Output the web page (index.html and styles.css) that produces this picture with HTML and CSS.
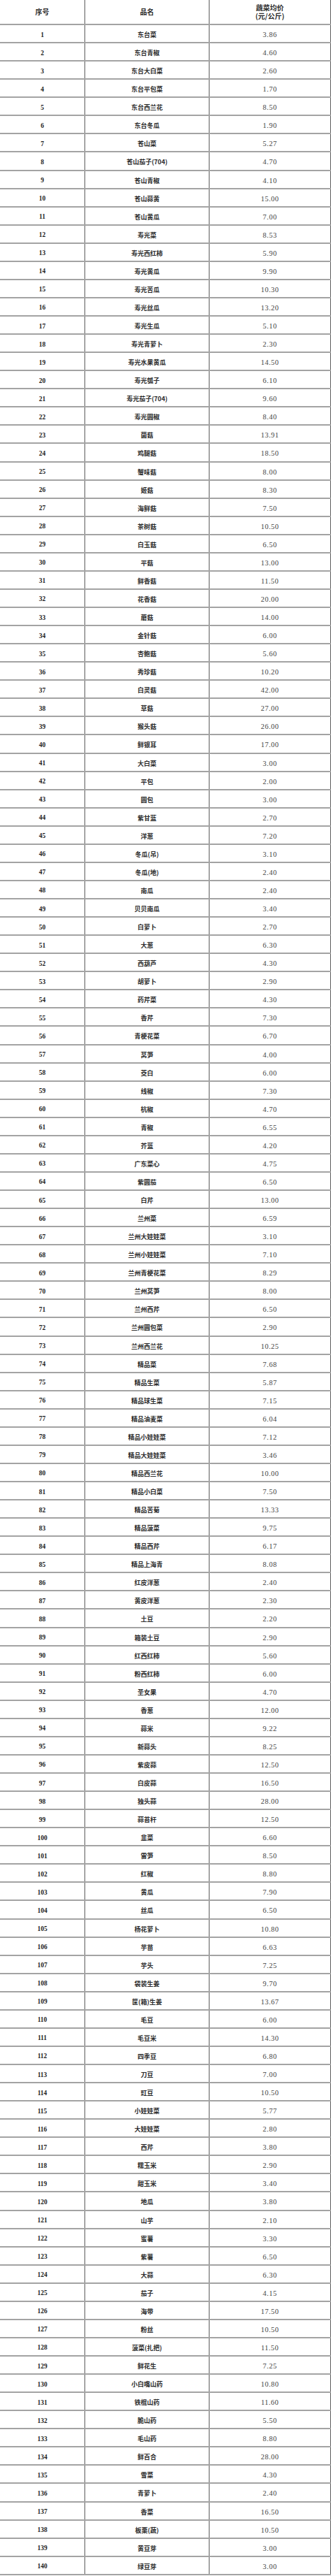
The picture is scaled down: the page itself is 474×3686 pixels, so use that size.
FILE: index.html
```html
<!DOCTYPE html>
<html lang="zh-CN">
<head>
<meta charset="utf-8">
<title>蔬菜均价</title>
<link rel="stylesheet" href="styles.css">
</head>
<body>
<div class="sheet">
  <div class="row head">
    <div class="c idx">序号</div>
    <div class="c name">品名</div>
    <div class="c price">蔬菜均价<br>(元/公斤)</div>
  </div>
  <div class="row"><div class="c idx">1</div><div class="c name">东台菜</div><div class="c price">3.86</div></div>
  <div class="row"><div class="c idx">2</div><div class="c name">东台青椒</div><div class="c price">4.60</div></div>
  <div class="row"><div class="c idx">3</div><div class="c name">东台大白菜</div><div class="c price">2.60</div></div>
  <div class="row"><div class="c idx">4</div><div class="c name">东台平包菜</div><div class="c price">1.70</div></div>
  <div class="row"><div class="c idx">5</div><div class="c name">东台西兰花</div><div class="c price">8.50</div></div>
  <div class="row"><div class="c idx">6</div><div class="c name">东台冬瓜</div><div class="c price">1.90</div></div>
  <div class="row"><div class="c idx">7</div><div class="c name">苍山菜</div><div class="c price">5.27</div></div>
  <div class="row"><div class="c idx">8</div><div class="c name">苍山茄子(704)</div><div class="c price">4.70</div></div>
  <div class="row"><div class="c idx">9</div><div class="c name">苍山青椒</div><div class="c price">4.10</div></div>
  <div class="row"><div class="c idx">10</div><div class="c name">苍山蒜黄</div><div class="c price">15.00</div></div>
  <div class="row"><div class="c idx">11</div><div class="c name">苍山黄瓜</div><div class="c price">7.00</div></div>
  <div class="row"><div class="c idx">12</div><div class="c name">寿光菜</div><div class="c price">8.53</div></div>
  <div class="row"><div class="c idx">13</div><div class="c name">寿光西红柿</div><div class="c price">5.90</div></div>
  <div class="row"><div class="c idx">14</div><div class="c name">寿光黄瓜</div><div class="c price">9.90</div></div>
  <div class="row"><div class="c idx">15</div><div class="c name">寿光苦瓜</div><div class="c price">10.30</div></div>
  <div class="row"><div class="c idx">16</div><div class="c name">寿光丝瓜</div><div class="c price">13.20</div></div>
  <div class="row"><div class="c idx">17</div><div class="c name">寿光生瓜</div><div class="c price">5.10</div></div>
  <div class="row"><div class="c idx">18</div><div class="c name">寿光青萝卜</div><div class="c price">2.30</div></div>
  <div class="row"><div class="c idx">19</div><div class="c name">寿光水果黄瓜</div><div class="c price">14.50</div></div>
  <div class="row"><div class="c idx">20</div><div class="c name">寿光瓠子</div><div class="c price">6.10</div></div>
  <div class="row"><div class="c idx">21</div><div class="c name">寿光茄子(704)</div><div class="c price">9.60</div></div>
  <div class="row"><div class="c idx">22</div><div class="c name">寿光圆椒</div><div class="c price">8.40</div></div>
  <div class="row"><div class="c idx">23</div><div class="c name">菌菇</div><div class="c price">13.91</div></div>
  <div class="row"><div class="c idx">24</div><div class="c name">鸡腿菇</div><div class="c price">18.50</div></div>
  <div class="row"><div class="c idx">25</div><div class="c name">蟹味菇</div><div class="c price">8.00</div></div>
  <div class="row"><div class="c idx">26</div><div class="c name">姬菇</div><div class="c price">8.30</div></div>
  <div class="row"><div class="c idx">27</div><div class="c name">海鲜菇</div><div class="c price">7.50</div></div>
  <div class="row"><div class="c idx">28</div><div class="c name">茶树菇</div><div class="c price">10.50</div></div>
  <div class="row"><div class="c idx">29</div><div class="c name">白玉菇</div><div class="c price">6.50</div></div>
  <div class="row"><div class="c idx">30</div><div class="c name">平菇</div><div class="c price">13.00</div></div>
  <div class="row"><div class="c idx">31</div><div class="c name">鲜香菇</div><div class="c price">11.50</div></div>
  <div class="row"><div class="c idx">32</div><div class="c name">花香菇</div><div class="c price">20.00</div></div>
  <div class="row"><div class="c idx">33</div><div class="c name">蘑菇</div><div class="c price">14.00</div></div>
  <div class="row"><div class="c idx">34</div><div class="c name">金针菇</div><div class="c price">6.00</div></div>
  <div class="row"><div class="c idx">35</div><div class="c name">杏鲍菇</div><div class="c price">5.60</div></div>
  <div class="row"><div class="c idx">36</div><div class="c name">秀珍菇</div><div class="c price">10.20</div></div>
  <div class="row"><div class="c idx">37</div><div class="c name">白灵菇</div><div class="c price">42.00</div></div>
  <div class="row"><div class="c idx">38</div><div class="c name">草菇</div><div class="c price">27.00</div></div>
  <div class="row"><div class="c idx">39</div><div class="c name">猴头菇</div><div class="c price">26.00</div></div>
  <div class="row"><div class="c idx">40</div><div class="c name">鲜银耳</div><div class="c price">17.00</div></div>
  <div class="row"><div class="c idx">41</div><div class="c name">大白菜</div><div class="c price">3.00</div></div>
  <div class="row"><div class="c idx">42</div><div class="c name">平包</div><div class="c price">2.00</div></div>
  <div class="row"><div class="c idx">43</div><div class="c name">圆包</div><div class="c price">3.00</div></div>
  <div class="row"><div class="c idx">44</div><div class="c name">紫甘蓝</div><div class="c price">2.70</div></div>
  <div class="row"><div class="c idx">45</div><div class="c name">洋葱</div><div class="c price">7.20</div></div>
  <div class="row"><div class="c idx">46</div><div class="c name">冬瓜(吊)</div><div class="c price">3.10</div></div>
  <div class="row"><div class="c idx">47</div><div class="c name">冬瓜(地)</div><div class="c price">2.40</div></div>
  <div class="row"><div class="c idx">48</div><div class="c name">南瓜</div><div class="c price">2.40</div></div>
  <div class="row"><div class="c idx">49</div><div class="c name">贝贝南瓜</div><div class="c price">3.40</div></div>
  <div class="row"><div class="c idx">50</div><div class="c name">白萝卜</div><div class="c price">2.70</div></div>
  <div class="row"><div class="c idx">51</div><div class="c name">大葱</div><div class="c price">6.30</div></div>
  <div class="row"><div class="c idx">52</div><div class="c name">西葫芦</div><div class="c price">4.30</div></div>
  <div class="row"><div class="c idx">53</div><div class="c name">胡萝卜</div><div class="c price">2.90</div></div>
  <div class="row"><div class="c idx">54</div><div class="c name">药芹菜</div><div class="c price">4.30</div></div>
  <div class="row"><div class="c idx">55</div><div class="c name">香芹</div><div class="c price">7.30</div></div>
  <div class="row"><div class="c idx">56</div><div class="c name">青梗花菜</div><div class="c price">6.70</div></div>
  <div class="row"><div class="c idx">57</div><div class="c name">莴笋</div><div class="c price">4.00</div></div>
  <div class="row"><div class="c idx">58</div><div class="c name">茭白</div><div class="c price">6.00</div></div>
  <div class="row"><div class="c idx">59</div><div class="c name">线椒</div><div class="c price">7.30</div></div>
  <div class="row"><div class="c idx">60</div><div class="c name">杭椒</div><div class="c price">4.70</div></div>
  <div class="row"><div class="c idx">61</div><div class="c name">青椒</div><div class="c price">6.55</div></div>
  <div class="row"><div class="c idx">62</div><div class="c name">芥蓝</div><div class="c price">4.20</div></div>
  <div class="row"><div class="c idx">63</div><div class="c name">广东菜心</div><div class="c price">4.75</div></div>
  <div class="row"><div class="c idx">64</div><div class="c name">紫圆茄</div><div class="c price">6.50</div></div>
  <div class="row"><div class="c idx">65</div><div class="c name">白芹</div><div class="c price">13.00</div></div>
  <div class="row"><div class="c idx">66</div><div class="c name">兰州菜</div><div class="c price">6.59</div></div>
  <div class="row"><div class="c idx">67</div><div class="c name">兰州大娃娃菜</div><div class="c price">3.10</div></div>
  <div class="row"><div class="c idx">68</div><div class="c name">兰州小娃娃菜</div><div class="c price">7.10</div></div>
  <div class="row"><div class="c idx">69</div><div class="c name">兰州青梗花菜</div><div class="c price">8.29</div></div>
  <div class="row"><div class="c idx">70</div><div class="c name">兰州莴笋</div><div class="c price">8.00</div></div>
  <div class="row"><div class="c idx">71</div><div class="c name">兰州西芹</div><div class="c price">6.50</div></div>
  <div class="row"><div class="c idx">72</div><div class="c name">兰州圆包菜</div><div class="c price">2.90</div></div>
  <div class="row"><div class="c idx">73</div><div class="c name">兰州西兰花</div><div class="c price">10.25</div></div>
  <div class="row"><div class="c idx">74</div><div class="c name">精品菜</div><div class="c price">7.68</div></div>
  <div class="row"><div class="c idx">75</div><div class="c name">精品生菜</div><div class="c price">5.87</div></div>
  <div class="row"><div class="c idx">76</div><div class="c name">精品球生菜</div><div class="c price">7.15</div></div>
  <div class="row"><div class="c idx">77</div><div class="c name">精品油麦菜</div><div class="c price">6.04</div></div>
  <div class="row"><div class="c idx">78</div><div class="c name">精品小娃娃菜</div><div class="c price">7.12</div></div>
  <div class="row"><div class="c idx">79</div><div class="c name">精品大娃娃菜</div><div class="c price">3.46</div></div>
  <div class="row"><div class="c idx">80</div><div class="c name">精品西兰花</div><div class="c price">10.00</div></div>
  <div class="row"><div class="c idx">81</div><div class="c name">精品小白菜</div><div class="c price">7.50</div></div>
  <div class="row"><div class="c idx">82</div><div class="c name">精品苦菊</div><div class="c price">13.33</div></div>
  <div class="row"><div class="c idx">83</div><div class="c name">精品菠菜</div><div class="c price">9.75</div></div>
  <div class="row"><div class="c idx">84</div><div class="c name">精品西芹</div><div class="c price">6.17</div></div>
  <div class="row"><div class="c idx">85</div><div class="c name">精品上海青</div><div class="c price">8.08</div></div>
  <div class="row"><div class="c idx">86</div><div class="c name">红皮洋葱</div><div class="c price">2.40</div></div>
  <div class="row"><div class="c idx">87</div><div class="c name">黄皮洋葱</div><div class="c price">2.30</div></div>
  <div class="row"><div class="c idx">88</div><div class="c name">土豆</div><div class="c price">2.20</div></div>
  <div class="row"><div class="c idx">89</div><div class="c name">箱装土豆</div><div class="c price">2.90</div></div>
  <div class="row"><div class="c idx">90</div><div class="c name">红西红柿</div><div class="c price">5.60</div></div>
  <div class="row"><div class="c idx">91</div><div class="c name">粉西红柿</div><div class="c price">6.00</div></div>
  <div class="row"><div class="c idx">92</div><div class="c name">圣女果</div><div class="c price">4.70</div></div>
  <div class="row"><div class="c idx">93</div><div class="c name">香葱</div><div class="c price">12.00</div></div>
  <div class="row"><div class="c idx">94</div><div class="c name">蒜米</div><div class="c price">9.22</div></div>
  <div class="row"><div class="c idx">95</div><div class="c name">新蒜头</div><div class="c price">8.25</div></div>
  <div class="row"><div class="c idx">96</div><div class="c name">紫皮蒜</div><div class="c price">12.50</div></div>
  <div class="row"><div class="c idx">97</div><div class="c name">白皮蒜</div><div class="c price">16.50</div></div>
  <div class="row"><div class="c idx">98</div><div class="c name">独头蒜</div><div class="c price">28.00</div></div>
  <div class="row"><div class="c idx">99</div><div class="c name">蒜苔杆</div><div class="c price">12.50</div></div>
  <div class="row"><div class="c idx">100</div><div class="c name">韭菜</div><div class="c price">6.60</div></div>
  <div class="row"><div class="c idx">101</div><div class="c name">雷笋</div><div class="c price">8.50</div></div>
  <div class="row"><div class="c idx">102</div><div class="c name">红椒</div><div class="c price">8.80</div></div>
  <div class="row"><div class="c idx">103</div><div class="c name">黄瓜</div><div class="c price">7.90</div></div>
  <div class="row"><div class="c idx">104</div><div class="c name">丝瓜</div><div class="c price">6.50</div></div>
  <div class="row"><div class="c idx">105</div><div class="c name">杨花萝卜</div><div class="c price">10.80</div></div>
  <div class="row"><div class="c idx">106</div><div class="c name">芋苗</div><div class="c price">6.63</div></div>
  <div class="row"><div class="c idx">107</div><div class="c name">芋头</div><div class="c price">7.25</div></div>
  <div class="row"><div class="c idx">108</div><div class="c name">袋装生姜</div><div class="c price">9.70</div></div>
  <div class="row"><div class="c idx">109</div><div class="c name">筐(箱)生姜</div><div class="c price">13.67</div></div>
  <div class="row"><div class="c idx">110</div><div class="c name">毛豆</div><div class="c price">6.00</div></div>
  <div class="row"><div class="c idx">111</div><div class="c name">毛豆米</div><div class="c price">14.30</div></div>
  <div class="row"><div class="c idx">112</div><div class="c name">四季豆</div><div class="c price">6.80</div></div>
  <div class="row"><div class="c idx">113</div><div class="c name">刀豆</div><div class="c price">7.00</div></div>
  <div class="row"><div class="c idx">114</div><div class="c name">豇豆</div><div class="c price">10.50</div></div>
  <div class="row"><div class="c idx">115</div><div class="c name">小娃娃菜</div><div class="c price">5.77</div></div>
  <div class="row"><div class="c idx">116</div><div class="c name">大娃娃菜</div><div class="c price">2.80</div></div>
  <div class="row"><div class="c idx">117</div><div class="c name">西芹</div><div class="c price">3.80</div></div>
  <div class="row"><div class="c idx">118</div><div class="c name">糯玉米</div><div class="c price">2.90</div></div>
  <div class="row"><div class="c idx">119</div><div class="c name">甜玉米</div><div class="c price">3.40</div></div>
  <div class="row"><div class="c idx">120</div><div class="c name">地瓜</div><div class="c price">3.80</div></div>
  <div class="row"><div class="c idx">121</div><div class="c name">山芋</div><div class="c price">2.10</div></div>
  <div class="row"><div class="c idx">122</div><div class="c name">蜜薯</div><div class="c price">3.30</div></div>
  <div class="row"><div class="c idx">123</div><div class="c name">紫薯</div><div class="c price">6.50</div></div>
  <div class="row"><div class="c idx">124</div><div class="c name">大蒜</div><div class="c price">6.30</div></div>
  <div class="row"><div class="c idx">125</div><div class="c name">茄子</div><div class="c price">4.15</div></div>
  <div class="row"><div class="c idx">126</div><div class="c name">海带</div><div class="c price">17.50</div></div>
  <div class="row"><div class="c idx">127</div><div class="c name">粉丝</div><div class="c price">10.50</div></div>
  <div class="row"><div class="c idx">128</div><div class="c name">菠菜(扎把)</div><div class="c price">11.50</div></div>
  <div class="row"><div class="c idx">129</div><div class="c name">鲜花生</div><div class="c price">7.25</div></div>
  <div class="row"><div class="c idx">130</div><div class="c name">小白嘴山药</div><div class="c price">10.80</div></div>
  <div class="row"><div class="c idx">131</div><div class="c name">铁棍山药</div><div class="c price">11.60</div></div>
  <div class="row"><div class="c idx">132</div><div class="c name">脆山药</div><div class="c price">5.50</div></div>
  <div class="row"><div class="c idx">133</div><div class="c name">毛山药</div><div class="c price">8.80</div></div>
  <div class="row"><div class="c idx">134</div><div class="c name">鲜百合</div><div class="c price">28.00</div></div>
  <div class="row"><div class="c idx">135</div><div class="c name">雪菜</div><div class="c price">4.30</div></div>
  <div class="row"><div class="c idx">136</div><div class="c name">青萝卜</div><div class="c price">2.40</div></div>
  <div class="row"><div class="c idx">137</div><div class="c name">香菜</div><div class="c price">16.50</div></div>
  <div class="row"><div class="c idx">138</div><div class="c name">板栗(蔬)</div><div class="c price">10.50</div></div>
  <div class="row"><div class="c idx">139</div><div class="c name">黄豆芽</div><div class="c price">3.00</div></div>
  <div class="row"><div class="c idx">140</div><div class="c name">绿豆芽</div><div class="c price">3.00</div></div>
</div>
</body>
</html>
```

FILE: styles.css
```css
html, body {
  margin: 0;
  padding: 0;
  background: #ffffff;
}

.sheet {
  width: 474px;
  display: flex;
  flex-direction: column;
}

.row {
  display: grid;
  grid-template-columns: 122px 178px 174px;
  height: 26.07px;
  box-sizing: border-box;
  border-bottom: 2px solid #a3a3a3;
}

.row.head {
  height: 36px;
}

.c {
  display: flex;
  align-items: center;
  justify-content: center;
  text-align: center;
  border-right: 1px solid #5a5a5a;
  padding-top: 3px;
  box-sizing: border-box;
}

.idx {
  font-family: "Liberation Serif", "Noto Sans CJK SC", serif;
  font-weight: 700;
  font-size: 9.5px;
  color: #1e1e1e;
}

.name {
  font-family: "Noto Sans CJK SC", sans-serif;
  font-weight: 700;
  font-size: 9px;
  color: #2a2a2a;
}

.price {
  font-family: "Liberation Serif", serif;
  font-size: 10.5px;
  letter-spacing: 0.5px;
  color: #444444;
}

.head .c {
  font-family: "Noto Sans CJK SC", sans-serif;
  font-weight: 700;
  font-size: 10px;
  letter-spacing: 0;
  color: #2a2a2a;
  line-height: 12px;
  padding-top: 0;
}
```
